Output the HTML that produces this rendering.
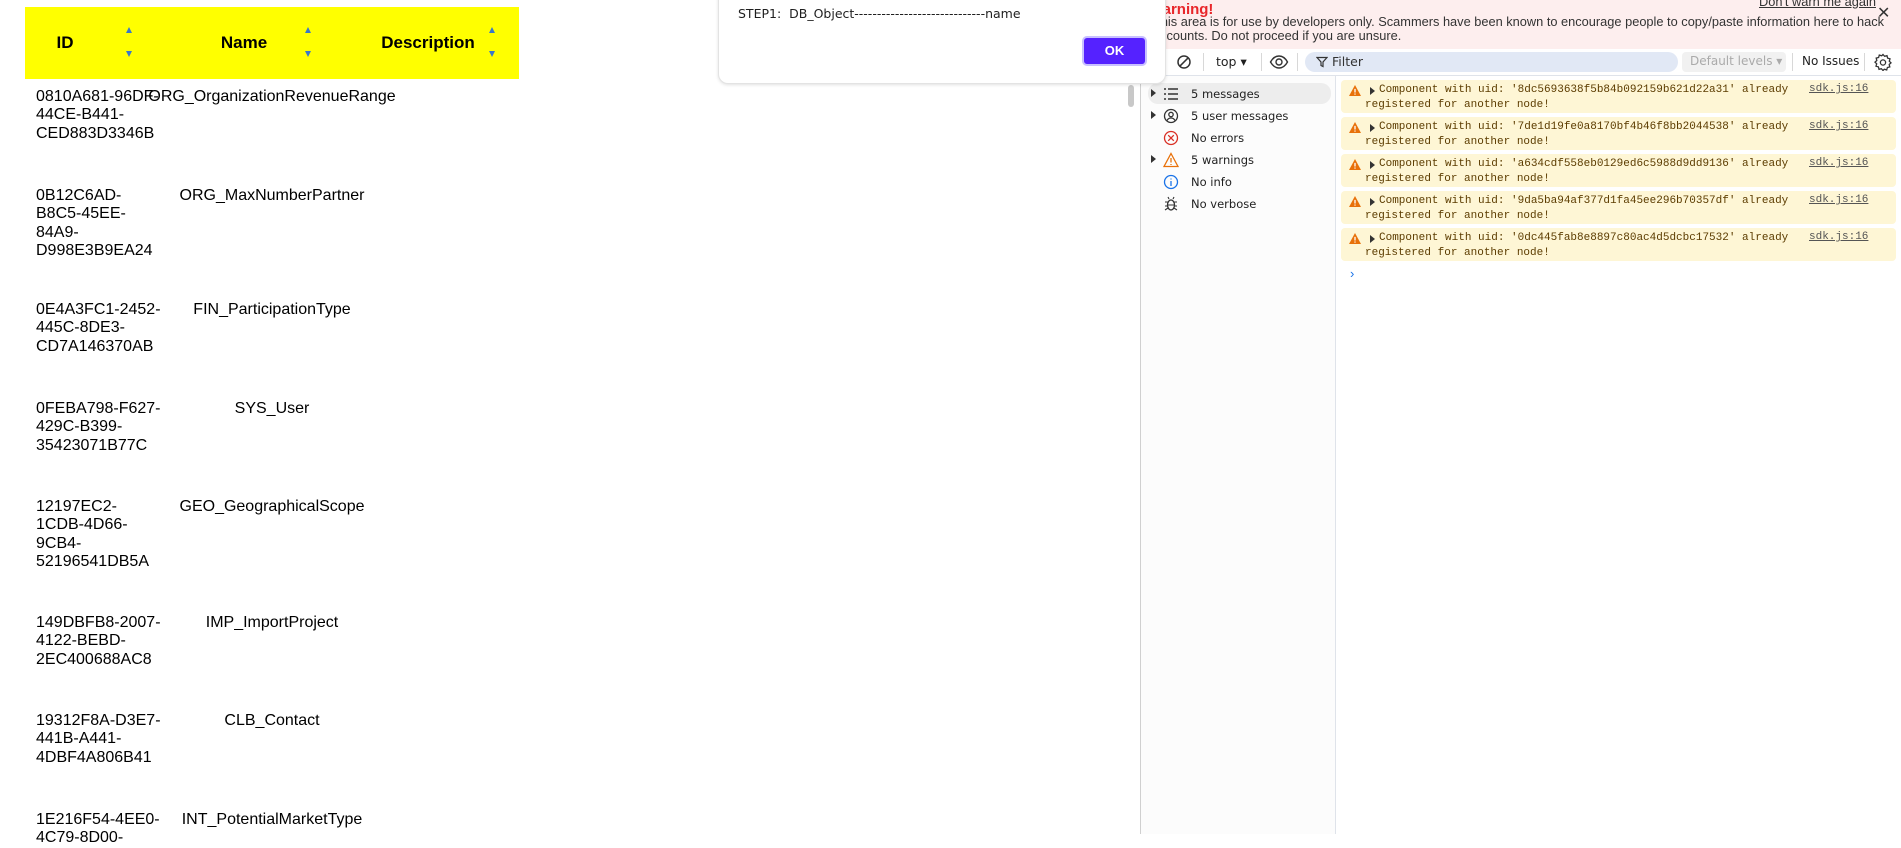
<!DOCTYPE html>
<html><head><meta charset="utf-8"><style>
*{margin:0;padding:0;box-sizing:border-box}
body{width:1901px;height:834px;overflow:hidden;background:#fff;position:relative;font-family:"Liberation Sans",sans-serif;color:#000}
.a{position:absolute;white-space:nowrap}
.hdr{left:25px;top:7px;width:494px;height:72px;background:#ffff00}
.h{font-weight:bold;font-size:17px;top:33px;transform:translateX(-50%)}
.ar{width:0;height:0;border-left:3.5px solid transparent;border-right:3.5px solid transparent}
.up{border-bottom:6px solid #3a78c8}
.dn{border-top:6px solid #3a78c8}
.id{left:36px;font-size:16px;line-height:18.3px}
.nm{left:272px;transform:translateX(-50%);font-size:16px;line-height:18.3px}
.dt{left:1140px;top:0;width:761px;height:834px;background:#fff;border-left:1px solid #d0d0d0;overflow:hidden}
.side{font-family:"DejaVu Sans","Liberation Sans",sans-serif;font-size:11.5px;color:#1f1f1f}
.msg{position:absolute;left:200px;width:555px;height:33px;background:#fef6d5;border-radius:4px;font-family:"Liberation Mono",monospace;font-size:11px;color:#5c3c00}
.msg .t1{position:absolute;left:38px;top:4px}
.msg .t2{position:absolute;left:24px;top:19px}
.msg .lk{position:absolute;left:468px;top:3px;color:#555;text-decoration:underline}
.msg .wi{position:absolute;left:8px;top:5px}
.msg .tri{position:absolute;left:29px;top:7px;border-left:5px solid #333;border-top:4px solid transparent;border-bottom:4px solid transparent}
.stri{position:absolute;border-left:5px solid #333;border-top:4px solid transparent;border-bottom:4px solid transparent}
</style></head><body>

<div class="a hdr"></div>
<div class="a h" style="left:65px">ID</div>
<div class="a h" style="left:244px">Name</div>
<div class="a h" style="left:428px">Description</div>
<div class="a ar up" style="left:126px;top:27px"></div><div class="a ar dn" style="left:126px;top:51px"></div>
<div class="a ar up" style="left:305px;top:27px"></div><div class="a ar dn" style="left:305px;top:51px"></div>
<div class="a ar up" style="left:489px;top:27px"></div><div class="a ar dn" style="left:489px;top:51px"></div>

<div class="a id" style="top:88px">0810A681-96DF-<br>44CE-B441-<br>CED883D3346B</div>
<div class="a nm" style="top:88px">ORG_OrganizationRevenueRange</div>
<div class="a id" style="top:187px">0B12C6AD-<br>B8C5-45EE-<br>84A9-<br>D998E3B9EA24</div>
<div class="a nm" style="top:187px">ORG_MaxNumberPartner</div>
<div class="a id" style="top:301px">0E4A3FC1-2452-<br>445C-8DE3-<br>CD7A146370AB</div>
<div class="a nm" style="top:301px">FIN_ParticipationType</div>
<div class="a id" style="top:400px">0FEBA798-F627-<br>429C-B399-<br>35423071B77C</div>
<div class="a nm" style="top:400px">SYS_User</div>
<div class="a id" style="top:498px">12197EC2-<br>1CDB-4D66-<br>9CB4-<br>52196541DB5A</div>
<div class="a nm" style="top:498px">GEO_GeographicalScope</div>
<div class="a id" style="top:614px">149DBFB8-2007-<br>4122-BEBD-<br>2EC400688AC8</div>
<div class="a nm" style="top:614px">IMP_ImportProject</div>
<div class="a id" style="top:712px">19312F8A-D3E7-<br>441B-A441-<br>4DBF4A806B41</div>
<div class="a nm" style="top:712px">CLB_Contact</div>
<div class="a id" style="top:811px">1E216F54-4EE0-<br>4C79-8D00-</div>
<div class="a nm" style="top:811px">INT_PotentialMarketType</div>

<div class="a" style="left:1128px;top:85px;width:6px;height:22px;background:#c8c8c8;border-radius:3px"></div>

<div class="a dt">
  <div class="a" style="left:0;top:0;width:761px;height:49px;background:#fdeeee"></div>
  <div class="a" style="left:8px;top:1px;font-size:15px;font-weight:bold;color:#e8262a">Warning!</div>
  <div class="a" style="left:12px;top:15px;font-size:12.8px;color:#333;line-height:13.5px">This area is for use by developers only. Scammers have been known to encourage people to copy/paste information here to hack<br>accounts. Do not proceed if you are unsure.</div>
  <div class="a" style="left:618px;top:-6px;font-size:12.8px;color:#333;text-decoration:underline">Don't warn me again</div>
  <div class="a" style="left:736px;top:3px;font-size:16px;color:#333">✕</div>

  <div class="a" style="left:0;top:75px;width:761px;height:1px;background:#dfe3ea"></div>
  <svg class="a" style="left:35px;top:54px" width="16" height="16" viewBox="0 0 16 16"><circle cx="8" cy="8" r="6" fill="none" stroke="#333" stroke-width="1.5"/><line x1="3.8" y1="12.2" x2="12.2" y2="3.8" stroke="#333" stroke-width="1.5"/></svg>
  <div class="a" style="left:62px;top:53px;width:1px;height:18px;background:#d8d8d8"></div>
  <div class="a side" style="left:75px;top:54px;font-size:12.5px">top ▾</div>
  <div class="a" style="left:120px;top:53px;width:1px;height:18px;background:#d8d8d8"></div>
  <svg class="a" style="left:128px;top:54px" width="20" height="16" viewBox="0 0 20 16"><path d="M1.5 8C4 3.5 7 2 10 2s6 1.5 8.5 6C16 12.5 13 14 10 14S4 12.5 1.5 8z" fill="none" stroke="#333" stroke-width="1.4"/><circle cx="10" cy="8" r="3" fill="none" stroke="#333" stroke-width="1.4"/></svg>
  <div class="a" style="left:156px;top:53px;width:1px;height:18px;background:#d8d8d8"></div>
  <div class="a" style="left:164px;top:52px;width:373px;height:20px;background:#e1e8f5;border-radius:10px"></div>
  <svg class="a" style="left:175px;top:56px" width="12" height="12" viewBox="0 0 12 12"><path d="M1 1.5h10L7 6v4.5L5 9.5V6z" fill="none" stroke="#333" stroke-width="1.2"/></svg>
  <div class="a side" style="left:191px;top:54px;font-size:12.5px;color:#333">Filter</div>
  <div class="a" style="left:541px;top:52px;width:104px;height:20px;background:#f1f1f1;border-radius:4px"></div>
  <div class="a side" style="left:549px;top:54px;font-size:12px;color:#aaa">Default levels ▾</div>
  <div class="a" style="left:651px;top:53px;width:1px;height:18px;background:#d8d8d8"></div>
  <div class="a side" style="left:661px;top:54px;font-size:12px">No Issues</div>
  <div class="a" style="left:723px;top:53px;width:1px;height:18px;background:#d8d8d8"></div>
  <svg class="a" style="left:733px;top:53px" width="18" height="18" viewBox="0 0 18 18"><path d="M9 1.5l1.6 1.8 2.4-.6.6 2.4 2.4.7-.7 2.4L17 9.9l-1.8 1.6.6 2.4-2.4.6-.7 2.4-2.4-.7L9 17.5l-1.6-1.8-2.4.6-.6-2.4-2.4-.7.7-2.4L1 9.1l1.8-1.6-.6-2.4 2.4-.6.7-2.4 2.4.7z" fill="none" stroke="#333" stroke-width="1.3"/><circle cx="9" cy="9.5" r="2.6" fill="none" stroke="#333" stroke-width="1.3"/></svg>

  <div class="a" style="left:0;top:76px;width:195px;height:758px;background:#fcfcfc;border-right:1px solid #dfe3ea"></div>
  <div class="a" style="left:7px;top:83px;width:183px;height:21px;background:#ededed;border-radius:10px"></div>
  <div class="stri" style="left:10px;top:89px"></div>
  <div class="stri" style="left:10px;top:111px"></div>
  <div class="stri" style="left:10px;top:155px"></div>
  <svg class="a" style="left:22px;top:87px" width="16" height="14" viewBox="0 0 16 14"><path d="M1 2h2M1 7h2M1 12h2M5 2h10M5 7h10M5 12h10" stroke="#333" stroke-width="1.4"/></svg>
  <div class="a side" style="left:50px;top:87px">5 messages</div>
  <svg class="a" style="left:22px;top:108px" width="16" height="16" viewBox="0 0 16 16"><circle cx="8" cy="8" r="6.5" fill="none" stroke="#333" stroke-width="1.3"/><circle cx="8" cy="6.5" r="2.2" fill="none" stroke="#333" stroke-width="1.3"/><path d="M4 12.5c1-2 2.5-2.5 4-2.5s3 .5 4 2.5" fill="none" stroke="#333" stroke-width="1.3"/></svg>
  <div class="a side" style="left:50px;top:109px">5 user messages</div>
  <svg class="a" style="left:22px;top:130px" width="16" height="16" viewBox="0 0 16 16"><circle cx="8" cy="8" r="6.5" fill="none" stroke="#d93025" stroke-width="1.3"/><path d="M5.2 5.2l5.6 5.6M10.8 5.2l-5.6 5.6" stroke="#d93025" stroke-width="1.3"/></svg>
  <div class="a side" style="left:50px;top:131px">No errors</div>
  <svg class="a" style="left:22px;top:152px" width="16" height="16" viewBox="0 0 16 16"><path d="M8 1.5L15 14.5H1z" fill="none" stroke="#e8710a" stroke-width="1.3"/><path d="M8 6v4.5M8 12v1" stroke="#e8710a" stroke-width="1.3"/></svg>
  <div class="a side" style="left:50px;top:153px">5 warnings</div>
  <svg class="a" style="left:22px;top:174px" width="16" height="16" viewBox="0 0 16 16"><circle cx="8" cy="8" r="6.5" fill="none" stroke="#1a73e8" stroke-width="1.3"/><path d="M8 7v5M8 4.5v1" stroke="#1a73e8" stroke-width="1.3"/></svg>
  <div class="a side" style="left:50px;top:175px">No info</div>
  <svg class="a" style="left:23px;top:196px" width="14" height="16" viewBox="0 0 14 16"><ellipse cx="7" cy="9" rx="3.5" ry="5" fill="none" stroke="#333" stroke-width="1.3"/><path d="M1 6h3M10 6h3M1 10h3M10 10h3M1 14l3-2M13 14l-3-2M5 3l-1-2M9 3l1-2M3.5 9h7" stroke="#333" stroke-width="1.1"/></svg>
  <div class="a side" style="left:50px;top:197px">No verbose</div>

  <div class="msg" style="top:80px"><svg class="wi" width="12" height="11" viewBox="0 0 11 10"><path d="M5.5 0L11 10H0z" fill="#e8710a"/><path d="M5.5 3.5v3.3M5.5 7.8v1" stroke="#fff" stroke-width="1.2"/></svg><div class="tri"></div><div class="t1">Component with uid: '8dc5693638f5b84b092159b621d22a31' already</div><div class="t2">registered for another node!</div><div class="lk">sdk.js:16</div></div>
  <div class="msg" style="top:117px"><svg class="wi" width="12" height="11" viewBox="0 0 11 10"><path d="M5.5 0L11 10H0z" fill="#e8710a"/><path d="M5.5 3.5v3.3M5.5 7.8v1" stroke="#fff" stroke-width="1.2"/></svg><div class="tri"></div><div class="t1">Component with uid: '7de1d19fe0a8170bf4b46f8bb2044538' already</div><div class="t2">registered for another node!</div><div class="lk">sdk.js:16</div></div>
  <div class="msg" style="top:154px"><svg class="wi" width="12" height="11" viewBox="0 0 11 10"><path d="M5.5 0L11 10H0z" fill="#e8710a"/><path d="M5.5 3.5v3.3M5.5 7.8v1" stroke="#fff" stroke-width="1.2"/></svg><div class="tri"></div><div class="t1">Component with uid: 'a634cdf558eb0129ed6c5988d9dd9136' already</div><div class="t2">registered for another node!</div><div class="lk">sdk.js:16</div></div>
  <div class="msg" style="top:191px"><svg class="wi" width="12" height="11" viewBox="0 0 11 10"><path d="M5.5 0L11 10H0z" fill="#e8710a"/><path d="M5.5 3.5v3.3M5.5 7.8v1" stroke="#fff" stroke-width="1.2"/></svg><div class="tri"></div><div class="t1">Component with uid: '9da5ba94af377d1fa45ee296b70357df' already</div><div class="t2">registered for another node!</div><div class="lk">sdk.js:16</div></div>
  <div class="msg" style="top:228px"><svg class="wi" width="12" height="11" viewBox="0 0 11 10"><path d="M5.5 0L11 10H0z" fill="#e8710a"/><path d="M5.5 3.5v3.3M5.5 7.8v1" stroke="#fff" stroke-width="1.2"/></svg><div class="tri"></div><div class="t1">Component with uid: '0dc445fab8e8897c80ac4d5dcbc17532' already</div><div class="t2">registered for another node!</div><div class="lk">sdk.js:16</div></div>
  <div class="a" style="left:209px;top:266px;font-size:13px;color:#1a73e8">›</div>
</div>

<div class="a" style="left:718px;top:-10px;width:448px;height:94px;background:#fff;border:1px solid #e3e3e3;border-radius:10px;box-shadow:0 1px 3px rgba(0,0,0,.12);z-index:5"></div>
<div class="a side" style="left:738px;top:6px;font-size:12.5px;z-index:6">STEP1:&nbsp; DB_Object-----------------------------name</div>
<div class="a" style="left:1082px;top:36px;width:65px;height:30px;background:#5522ff;border:2px solid #c8c0ff;border-radius:5px;z-index:6;color:#fff;font-weight:bold;font-size:13px;text-align:center;line-height:26px">OK</div>
</body></html>
